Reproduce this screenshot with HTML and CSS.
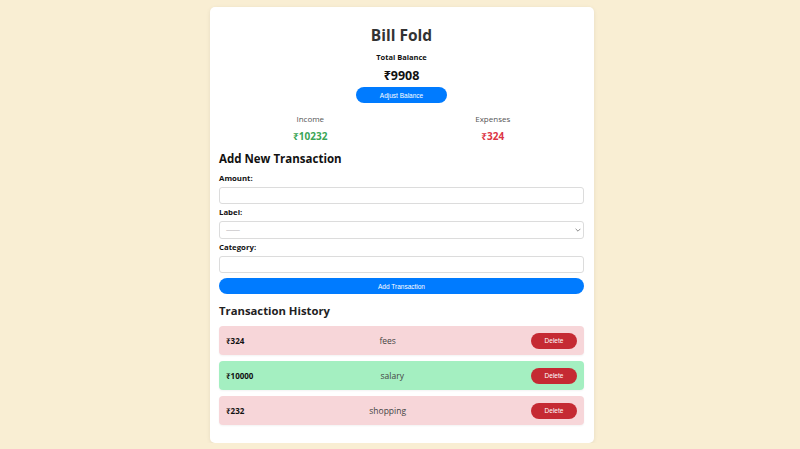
FILE: index.html
```html
<!DOCTYPE html>
<html lang="en">
<head>
<meta charset="utf-8">
<title>Bill Fold</title>
<link rel="stylesheet" href="styles.css">
</head>
<body>
<main class="card">
  <h1 class="title">Bill Fold</h1>
  <div class="balance-label">Total Balance</div>
  <div class="balance">₹9908</div>
  <button class="btn btn-adjust">Adjust Balance</button>
  <div class="summary">
    <div class="summary-col">
      <div class="summary-label">Income</div>
      <div class="summary-value income">₹10232</div>
    </div>
    <div class="summary-col">
      <div class="summary-label">Expenses</div>
      <div class="summary-value expense">₹324</div>
    </div>
  </div>
  <h2 class="section-title">Add New Transaction</h2>
  <form class="form">
    <label class="field-label">Amount:</label>
    <input class="field" type="text">
    <label class="field-label">Label:</label>
    <div class="select">
      <span class="select-placeholder">---------</span>
      <svg class="chev" viewBox="0 0 10 6" width="6" height="4"><path d="M1 1l4 4 4-4" fill="none" stroke="#777" stroke-width="1.4"/></svg>
    </div>
    <label class="field-label">Category:</label>
    <input class="field" type="text">
    <button type="button" class="btn btn-add">Add Transaction</button>
  </form>
  <h2 class="section-title history-title">Transaction History</h2>
  <ul class="list">
    <li class="row expense-row"><span class="amt">₹324</span><span class="lbl">fees</span><button class="btn btn-del">Delete</button></li>
    <li class="row income-row"><span class="amt">₹10000</span><span class="lbl">salary</span><button class="btn btn-del">Delete</button></li>
    <li class="row expense-row"><span class="amt">₹232</span><span class="lbl">shopping</span><button class="btn btn-del">Delete</button></li>
  </ul>
</main>
</body>
</html>
```
FILE: styles.css
```css
* { box-sizing: border-box; }
html, body { margin: 0; padding: 0; }
body {
  background: #f9eed3;
  font-family: "Open Sans", "Noto Sans", sans-serif;
  color: #222;
  padding: 7px 0 0 4px;
}
.card {
  width: 384px;
  margin: 0 auto;
  background: #fff;
  border-radius: 5px;
  box-shadow: 0 1px 4px rgba(0,0,0,0.08);
  padding: 9px 10px 18px 9px;
  display: flex;
  flex-direction: column;
}
.title {
  margin: 9px 0 0;
  font-size: 15.5px;
  line-height: 20px;
  font-weight: 700;
  text-align: center;
  color: #333;
}
.balance-label {
  margin-top: 7px;
  font-size: 7.5px;
  line-height: 10px;
  font-weight: 700;
  text-align: center;
  color: #111;
}
.balance {
  margin-top: 6px;
  font-size: 12.5px;
  line-height: 16px;
  font-weight: 700;
  text-align: center;
  color: #111;
}
.btn {
  border: none;
  color: #fff;
  font-family: "Liberation Sans", Arial, sans-serif;
  font-size: 6.5px;
  padding: 0;
  cursor: pointer;
}
.btn-adjust {
  margin: 3px auto 0;
  width: 91px;
  height: 16px;
  background: #007bff;
  border-radius: 8px;
}
.summary {
  margin-top: 11px;
  display: grid;
  grid-template-columns: 1fr 1fr;
  text-align: center;
}
.summary-label {
  font-size: 8px;
  line-height: 10px;
  color: #555;
}
.summary-value {
  margin-top: 6px;
  font-size: 10px;
  line-height: 13px;
  font-weight: 700;
}
.income { color: #3aa556; }
.expense { color: #dc3545; }
.section-title {
  margin: 8px 0 0;
  font-size: 11.5px;
  line-height: 15px;
  font-weight: 700;
  color: #111;
}
.form {
  display: flex;
  flex-direction: column;
  margin: 0;
}
.field-label {
  margin-top: 7px;
  font-size: 7.8px;
  line-height: 10px;
  font-weight: 700;
  color: #111;
}
.field-label + .field, .field-label + .select { margin-top: 4px; }
.field + .field-label, .select + .field-label { margin-top: 3px; }
.field {
  height: 17px;
  border: 1px solid #dcdcdc;
  border-radius: 3px;
  background: #fff;
  padding: 0 6px;
  font-size: 8px;
}
.select {
  height: 18px;
  border: 1px solid #dcdcdc;
  border-radius: 3px;
  display: flex;
  align-items: center;
  justify-content: space-between;
  padding: 0 2px 0 6px;
}
.select-placeholder {
  font-family: "Liberation Sans", Arial, sans-serif;
  font-size: 6px;
  color: #999;
  letter-spacing: -0.5px;
}
.chev { display: block; }
.btn-add {
  margin-top: 5px;
  height: 16px;
  background: #007bff;
  border-radius: 8px;
}
.history-title { margin-top: 9px; font-size: 11.3px; color: #222; }
.list {
  list-style: none;
  margin: 8px 0 0;
  padding: 0;
  display: flex;
  flex-direction: column;
  gap: 6px;
}
.row {
  height: 29px;
  border-radius: 4px;
  display: flex;
  align-items: center;
  justify-content: space-between;
  padding: 0 7px;
  box-shadow: 0 1px 2px rgba(0,0,0,0.05);
}
.expense-row { background: #f7d6d9; }
.income-row { background: #a4efc1; }
.amt {
  font-size: 8px;
  font-weight: 700;
  color: #111;
}
.lbl {
  font-size: 8.5px;
  color: #444;
}
.btn-del {
  width: 46px;
  height: 16px;
  border-radius: 8px;
  background: #c52a33;
}
```
